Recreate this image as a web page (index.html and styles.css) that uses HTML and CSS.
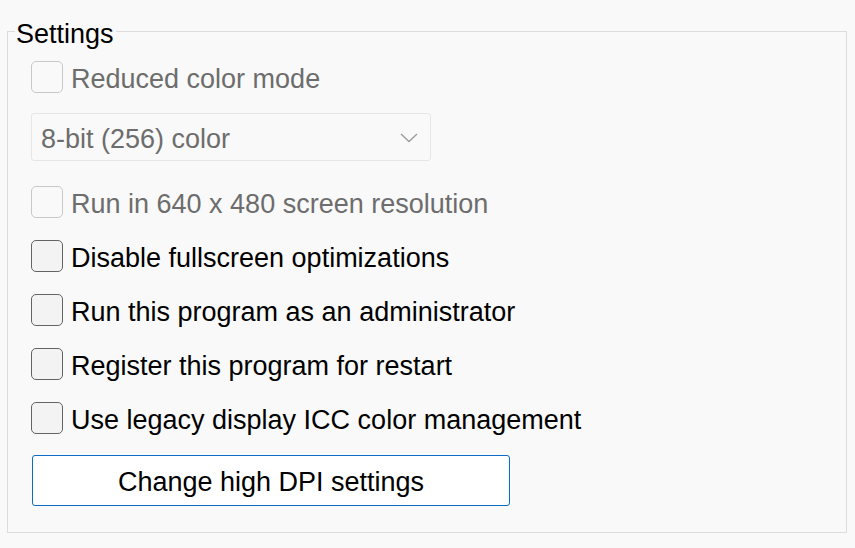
FILE: index.html
```html
<!DOCTYPE html>
<html lang="en">
<head>
  <meta charset="UTF-8" />
  <title>Compatibility Settings</title>
  <link rel="stylesheet" href="styles.css">
</head>
<body>
  <fieldset class="group">
    <legend>Settings</legend>

    <label class="option disabled">
      <span class="box"></span>
      <span class="text">Reduced color mode</span>
    </label>

    <div class="select disabled">
      <span class="text">8-bit (256) color</span>
      <svg class="chevron" width="18" height="10" viewBox="0 0 18 10" aria-hidden="true">
        <path d="M1 1 L9 8.5 L17 1" fill="none" stroke="#9a9a9a" stroke-width="1.3" />
      </svg>
    </div>

    <label class="option disabled">
      <span class="box"></span>
      <span class="text">Run in 640 x 480 screen resolution</span>
    </label>

    <label class="option">
      <span class="box"></span>
      <span class="text">Disable fullscreen optimizations</span>
    </label>

    <label class="option">
      <span class="box"></span>
      <span class="text">Run this program as an administrator</span>
    </label>

    <label class="option">
      <span class="box"></span>
      <span class="text">Register this program for restart</span>
    </label>

    <label class="option">
      <span class="box"></span>
      <span class="text">Use legacy display ICC color management</span>
    </label>

    <button class="dpi" type="button">Change high DPI settings</button>
  </fieldset>
</body>
</html>
```

FILE: styles.css
```css
/* Reset */
* {
  margin: 0; padding: 0; box-sizing: border-box;
}
html, body {
  width: 100%; height: 100%;
  overflow: hidden;
  background: #f9f9f9;
  font-family: "Liberation Sans", Arial, sans-serif;
  font-size: 27px;
  color: #000;
}

/* Group box */
.group {
  margin: 14px 0 0 7px;
  width: 840px;
  height: 519px;
  border: 1.5px solid #dcdcdc;
  padding: 13px 0 0 23px;
  display: flex;
  flex-direction: column;
  align-items: flex-start;
}
.group legend {
  margin-left: -16px;
  padding: 6px 2px 0 1px;
  line-height: 28px;
}

/* Checkbox rows */
.option {
  display: flex;
  align-items: center;
  gap: 8px;
  height: 32px;
  margin-bottom: 22px;
}
.option .text {
  padding-top: 4px;
}
.option .box {
  flex: none;
  width: 32px;
  height: 32px;
  border: 1.5px solid #636363;
  border-radius: 5px;
  background: #f3f3f3;
}
.option.disabled {
  color: #6d6d6d;
}
.option.disabled .box {
  border-color: #c8c8c8;
  background: #f9f9f9;
}

/* Dropdown */
.select {
  width: 400px;
  height: 48px;
  margin: -2px 0 25px 0;
  border: 1px solid #e6e6e6;
  border-radius: 3px;
  display: flex;
  align-items: center;
  justify-content: space-between;
  padding: 0 12px 0 9px;
  color: #6d6d6d;
}
.select .text {
  padding-top: 4px;
}
.chevron {
  margin-top: 2px;
}

/* Button */
.dpi {
  margin: -1px 0 0 1px;
  width: 478px;
  height: 51px;
  padding-top: 3px;
  background: #fff;
  border: 1.5px solid #0a6cc4;
  border-radius: 3px;
  font-family: inherit;
  font-size: 27px;
  color: #000;
}
```
